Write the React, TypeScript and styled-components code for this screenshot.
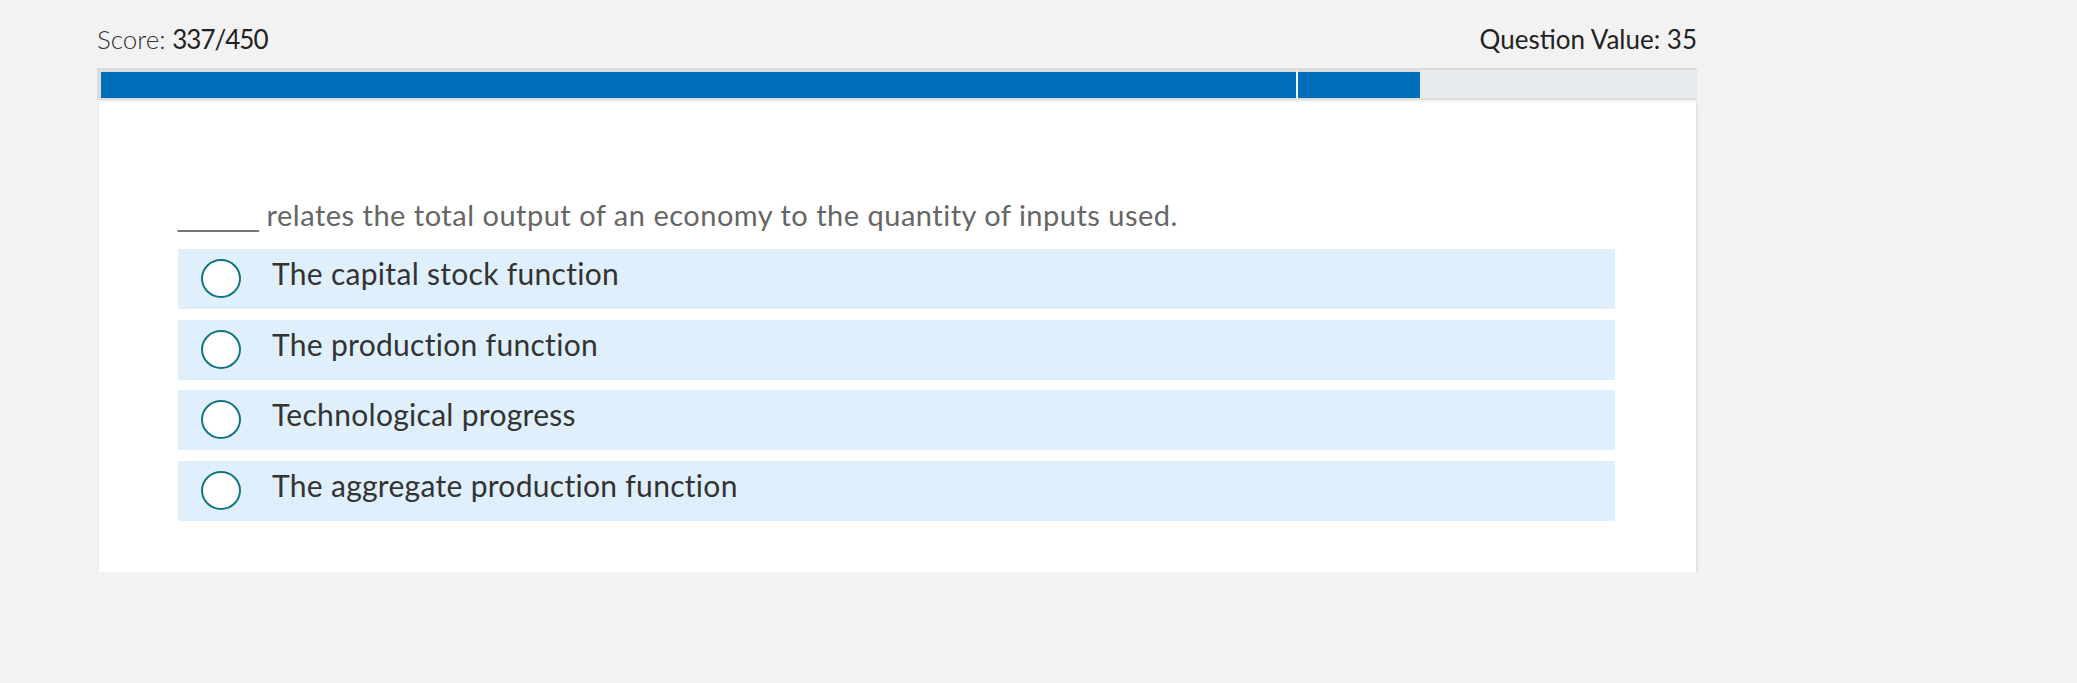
import styled, { createGlobalStyle } from 'styled-components';

const GlobalStyle = createGlobalStyle`
    html, body {
        margin: 0;
        padding: 0;
        background: #f2f2f2;
    }
    body {
        font-family: Lato, "Open Sans", "Liberation Sans", sans-serif;
        color: #333;
    }
`;

const score = 337;
const total = 450;
const questionValue = 35;

const options = [
    'The capital stock function',
    'The production function',
    'Technological progress',
    'The aggregate production function',
];

const App = () => {
    return <>
        <GlobalStyle />
        <Quiz.Page>
            <Quiz.Header>
                <Quiz.Score>
                    <Quiz.Light>Score:</Quiz.Light> <Quiz.Points>{score}/{total}</Quiz.Points>
                </Quiz.Score>
                <Quiz.Value>Question Value: {questionValue}</Quiz.Value>
            </Quiz.Header>
            <Quiz.Track>
                <Quiz.Fill style={{ width: `${(score / total) * 100}%` }} />
                <Quiz.Fill $next style={{ width: `${(questionValue / total) * 100}%` }} />
            </Quiz.Track>
            <Quiz.Card>
                <Quiz.Question>
                    <Quiz.Blank>_____</Quiz.Blank> relates the total output of an economy to the quantity of inputs used.
                </Quiz.Question>
                <Quiz.Options>
                    {options.map((o) => (
                        <Quiz.Option key={o}>
                            <Quiz.Radio />
                            <Quiz.Label>{o}</Quiz.Label>
                        </Quiz.Option>
                    ))}
                </Quiz.Options>
            </Quiz.Card>
        </Quiz.Page>
    </>
};

export default App;

const Quiz = {
    Page: styled.div`
        width: 1600px;
        margin-left: 97px;
        padding-top: 24px;
    `,
    Header: styled.div`
        display: flex;
        justify-content: space-between;
        align-items: baseline;
        font-size: 26px;
        line-height: 31px;
        margin-bottom: 13px;
    `,
    Score: styled.div`
        color: #222;
    `,
    Light: styled.span`
        font-weight: 300;
        color: #333;
    `,
    Points: styled.span`
        letter-spacing: -1px;
    `,
    Value: styled.div`
        color: #222;
    `,
    Track: styled.div`
        display: flex;
        box-sizing: border-box;
        height: 32px;
        border-top: 2px solid #dcdcdc;
        border-bottom: 2px solid #dcdcdc;
        border-left: 2px solid #dcdcdc;
        background: #e8ebee;
    `,
    Fill: styled.div<{ $next?: boolean }>`
        box-sizing: border-box;
        height: 28px;
        background: #006fba;
        border-top: 2px solid #dcdcdc;
        border-left: 2px solid ${(p) => (p.$next ? '#f7f8fa' : '#dcdcdc')};
    `,
    Card: styled.div`
        box-sizing: border-box;
        width: 1597px;
        margin-left: 2px;
        margin-top: 2px;
        background: #fff;
        box-shadow: 1px 2px 3px rgba(0, 0, 0, 0.13);
        padding: 96px 81px 51px 79px;
    `,
    Question: styled.div`
        font-size: 29px;
        line-height: 34px;
        letter-spacing: 0.5px;
        color: #666;
        margin-bottom: 16px;
    `,
    Blank: styled.span`
        font-family: "Liberation Sans", sans-serif;
        letter-spacing: 0;
        color: #777;
    `,
    Options: styled.div`
        display: flex;
        flex-direction: column;
        gap: 10.5px;
    `,
    Option: styled.label`
        display: flex;
        align-items: flex-start;
        height: 60px;
        padding-left: 23px;
        background: #dfeffc;
        cursor: pointer;
    `,
    Radio: styled.span`
        box-sizing: border-box;
        width: 40px;
        height: 39px;
        margin-top: 10px;
        border: 2.5px solid #137584;
        border-radius: 50%;
        background: #fff;
        flex-shrink: 0;
    `,
    Label: styled.span`
        margin-left: 31px;
        margin-top: 6px;
        font-size: 30px;
        line-height: 36px;
        letter-spacing: 0.3px;
        color: #333;
    `,
};
